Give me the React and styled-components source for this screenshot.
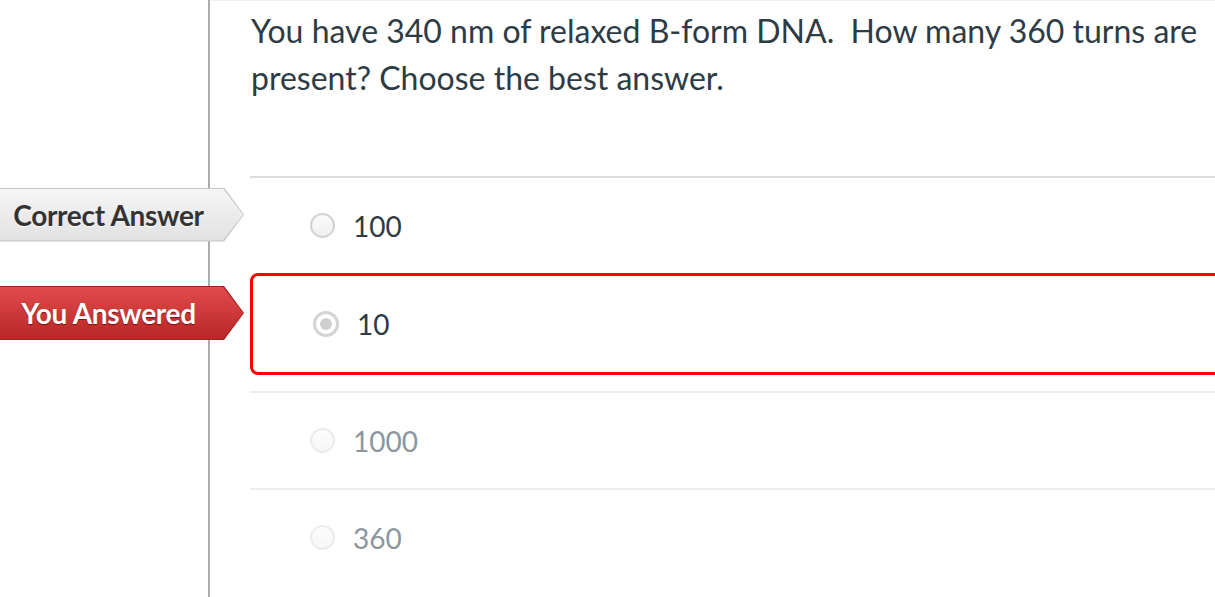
import React from "react";
import styled, { createGlobalStyle, css } from "styled-components";

const GlobalStyle = createGlobalStyle`
  html, body {
    margin: 0;
    padding: 0;
    overflow: hidden;
    background: #fff;
  }
  body {
    font-family: Lato, "Open Sans", "Liberation Sans", sans-serif;
    color: #2d3b45;
  }
`;

const Page = styled.div`
  display: flex;
  min-height: 597px;
  width: 1320px;
`;

const Sidebar = styled.div`
  flex: 0 0 208px;
  border-right: 2px solid #acacac;
`;

const Main = styled.div`
  flex: 1;
  padding: 6px 0 0 40px;
  border-top: 1px solid #f0f0f0;
`;

const Question = styled.p`
  margin: 0 0 75px 1px;
  width: 1010px;
  font-size: 32px;
  line-height: 47px;
  color: #2d3b45;
`;

const AnswerList = styled.div`
  border-top: 2px solid #dcdcdc;
`;

const Answer = styled.div`
  position: relative;
  display: flex;
  align-items: center;
  gap: 18px;
  height: 95px;
  padding-left: 60px;
  border-top: 2px solid #ececec;
  ${(p) => p.$first && css`border-top: none;`}
  ${(p) =>
    p.$wrong &&
    css`
      height: 96px;
      border: 3px solid #ff0000;
      border-radius: 8px;
      margin-bottom: 16px;
    `}
`;

const Radio = styled.span`
  box-sizing: border-box;
  flex: 0 0 auto;
  width: 25px;
  height: 25px;
  border-radius: 50%;
  border: 2px solid ${(p) => (p.$faded ? "#ebebeb" : "#d2d2d2")};
  background: ${(p) =>
    p.$faded
      ? "linear-gradient(#fdfdfd, #f6f6f6)"
      : "linear-gradient(#fbfbfb, #f0f0f0)"};
  display: flex;
  align-items: center;
  justify-content: center;
  ${(p) =>
    p.$checked &&
    css`
      width: 26px;
      height: 26px;
      border: 3px solid #d4d4d4;
      background: #fff;
      &::after {
        content: "";
        width: 12px;
        height: 12px;
        border-radius: 50%;
        background: #cfcfcf;
      }
    `}
`;

const AnswerText = styled.span`
  font-size: 28px;
  color: ${(p) => (p.$faded ? "#8b969e" : "#2d3b45")};
`;

const arrowShape = `polygon(0 0, calc(100% - 20px) 0, 100% 50%, calc(100% - 20px) 100%, 0 100%)`;

const Flag = styled.div`
  position: absolute;
  left: ${(p) => (p.$red ? "-253px" : "-250px")};
  top: calc(50% - 38px);
  width: 244px;
  height: 54px;
  box-sizing: border-box;
  padding: 1px 1px 1px 0;
  clip-path: ${arrowShape};
  background: ${(p) => (p.$red ? "#a11f1f" : "#c4c4c4")};
`;

const FlagBody = styled.div`
  height: 100%;
  clip-path: ${arrowShape};
  display: flex;
  align-items: center;
  justify-content: center;
  padding-right: 26px;
  font-size: 28px;
  font-weight: 700;
  letter-spacing: -0.3px;
  ${(p) =>
    p.$red
      ? css`
          background: linear-gradient(#e24b4b, #b92626);
          color: #fff;
          text-shadow: 0 1px 1px rgba(80, 0, 0, 0.7);
        `
      : css`
          background: linear-gradient(#f6f6f6, #e1e1e1);
          color: #333;
          text-shadow: 0 1px 0 #fff;
        `}
`;

const answers = [
  { text: "100", flag: "Correct Answer" },
  { text: "10", flag: "You Answered", wrong: true },
  { text: "1000", faded: true },
  { text: "360", faded: true },
];

export default function App() {
  return (
    <>
      <GlobalStyle />
      <Page>
        <Sidebar />
        <Main>
          <Question>
            You have 340 nm of relaxed B-form DNA.&nbsp; How many 360 turns are
            present? Choose the best answer.
          </Question>
          <AnswerList>
            {answers.map((a, i) => (
              <Answer key={a.text} $first={i === 0} $wrong={a.wrong}>
                {a.flag && (
                  <Flag $red={a.wrong}>
                    <FlagBody $red={a.wrong}>{a.flag}</FlagBody>
                  </Flag>
                )}
                <Radio $faded={a.faded} $checked={a.wrong} />
                <AnswerText $faded={a.faded}>{a.text}</AnswerText>
              </Answer>
            ))}
          </AnswerList>
        </Main>
      </Page>
    </>
  );
}
